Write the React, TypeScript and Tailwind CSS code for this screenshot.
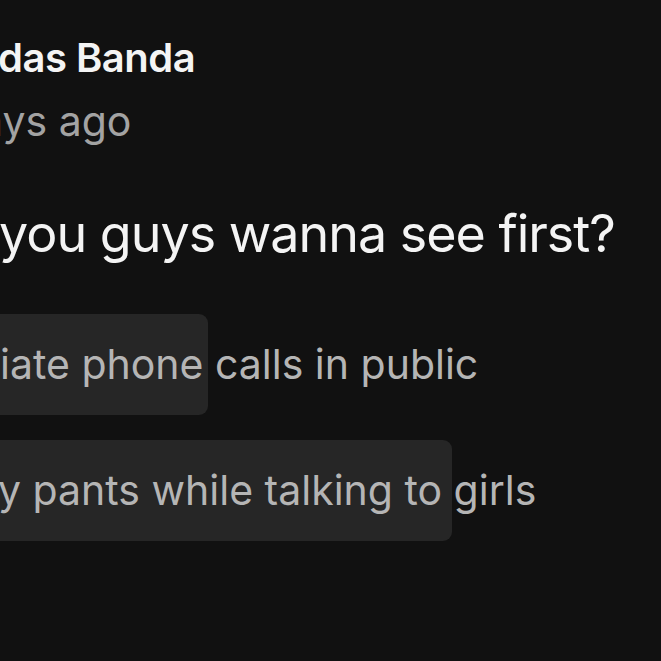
import React from 'react';

// Poll card, cropped: the left part of every line lies off-screen
const options = [
  { label: 'iate phone calls in public', barWidth: 208, shift: 0 },
  { label: 'y pants while talking to girls', barWidth: 452, shift: -2 },
];

const PollOption = ({ label, barWidth, shift }: { label: string; barWidth: number; shift: number }) => (
  <div className="relative h-[101px] flex items-center">
    <div className="absolute left-0 top-0 bottom-0 rounded-r-[9px] bg-[#262626]" style={{ width: barWidth }} />
    <span
      className="relative whitespace-nowrap text-[41px] leading-[101px] text-[#b5b5b5]"
      style={{ marginLeft: shift }}
    >
      {label}
    </span>
  </div>
);

export default function App() {
  return (
    <div
      className="w-[661px] h-[661px] overflow-hidden bg-[#111111] pt-[34px]"
      style={{ fontFamily: 'Inter, "Noto Sans", sans-serif' }}
    >
      <div className="whitespace-nowrap text-[40px] leading-[48px] font-semibold tracking-[-0.5px] text-[#f4f4f4] -ml-[2px]">
        das Banda
      </div>
      <div className="mt-[15px] whitespace-nowrap text-[41px] leading-[48px] text-[#a3a3a3] -ml-[20px]">
        ays ago
      </div>
      <div className="mt-[59px] whitespace-nowrap text-[52px] leading-[60px] tracking-[-1px] text-[#f4f4f4] -ml-[1px]">
        you guys wanna see first?
      </div>
      <div className="mt-[50px] flex flex-col gap-[25px]">
        {options.map((o) => (
          <PollOption key={o.label} {...o} />
        ))}
      </div>
    </div>
  );
}
